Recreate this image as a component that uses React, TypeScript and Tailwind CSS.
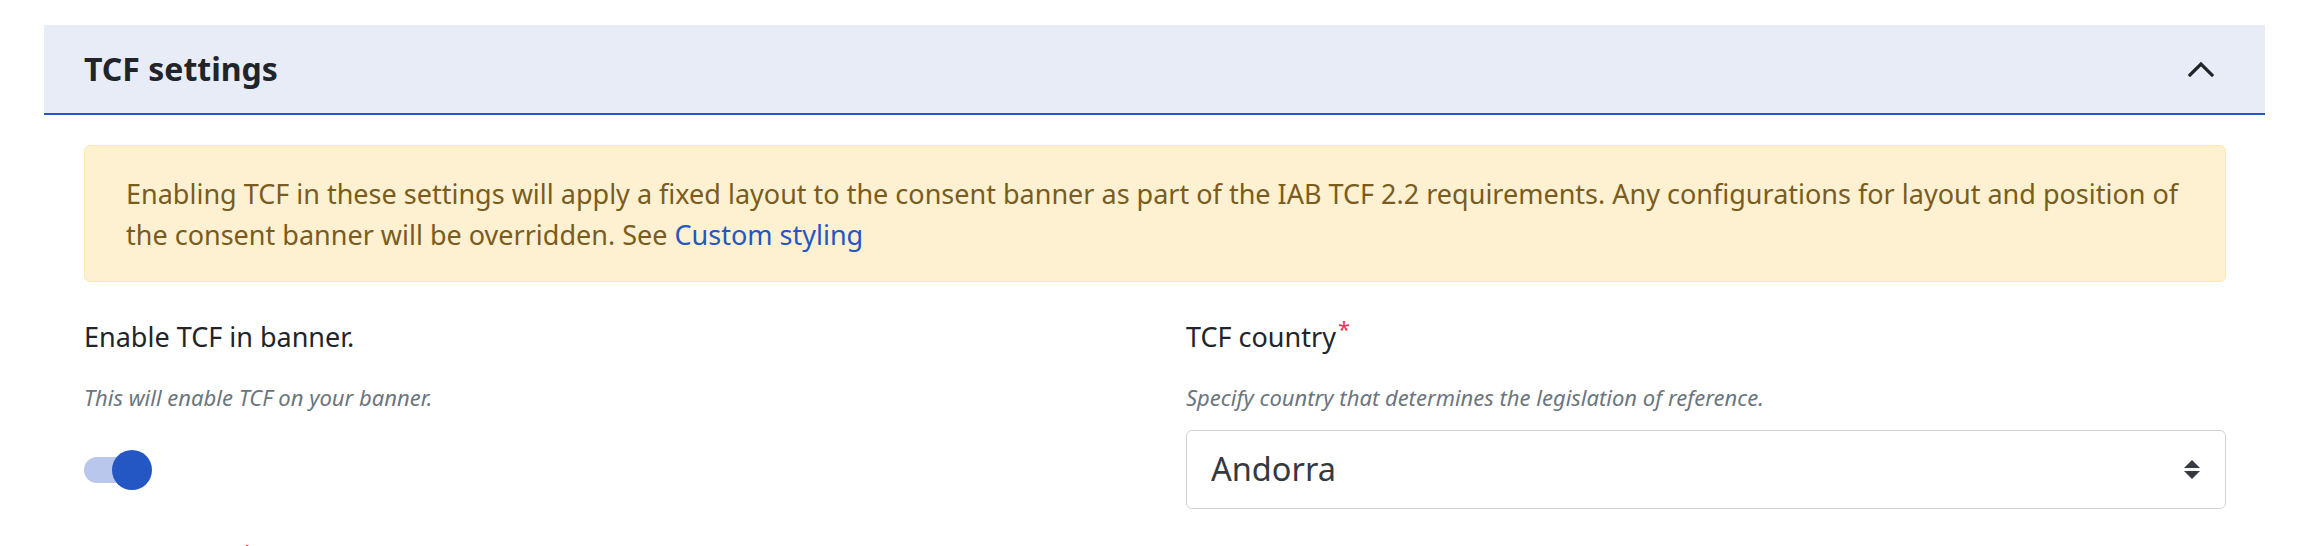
import React from 'react'

function ChevronUp() {
  return (
    <svg width="26" height="16" viewBox="0 0 26 16" fill="none" className="block">
      <path d="M2 14 L13 3 L24 14" stroke="#212529" strokeWidth="3.2" strokeLinecap="square" />
    </svg>
  )
}

function SelectArrows() {
  return (
    <svg width="16" height="20" viewBox="0 0 16 20" className="block">
      <path d="M8 0 L16 8 L0 8 Z" fill="#343a40" />
      <path d="M0 11 L16 11 L8 19 Z" fill="#343a40" />
    </svg>
  )
}

function Toggle({ on }: { on: boolean }) {
  return (
    <div className="relative w-[68px] h-[40px]">
      {/* track */}
      <div className="absolute left-0 top-[7px] w-[58px] h-[26px] rounded-full bg-[#b9c7ec]" />
      {/* knob */}
      <div className={`absolute top-0 w-[40px] h-[40px] rounded-full bg-[#2456c4] ${on ? 'right-0' : 'left-0'}`} />
    </div>
  )
}

function Label({ children, required }: { children: React.ReactNode; required?: boolean }) {
  return (
    <div className="text-[27px] leading-[1.5] text-[#212529]">
      {children}
      {required && <sup className="text-[#e8335a] text-[22px] ml-[2px] relative top-[-10px]">*</sup>}
    </div>
  )
}

function Help({ children }: { children: React.ReactNode }) {
  return <p className="mt-[24px] text-[22px] leading-[1.5] italic text-[#6c757d]">{children}</p>
}

export default function App() {
  return (
    <div className="w-[2316px] h-[546px] overflow-hidden bg-white pt-[25px] font-['Noto_Sans',sans-serif]">
      <section className="ml-[44px] w-[2221px]">
        {/* accordion header */}
        <div className="h-[90px] bg-[#e8ecf7] border-b-2 border-[#2456c4] flex items-center justify-between pl-[40px] pr-[51px]">
          <h2 className="text-[32px] font-bold text-[#212529] leading-none">TCF settings</h2>
          <ChevronUp />
        </div>

        {/* accordion body */}
        <div className="pl-[40px] pr-[39px] pt-[30px]">
          <div className="border border-[#fce8b4] bg-[#fdf1d2] rounded-[6px] px-[41px] pt-[26.5px] pb-[25px] text-[27px] leading-[41.5px] text-[#7a5c1e]">
            Enabling TCF in these settings will apply a fixed layout to the consent banner as part of the IAB TCF 2.2 requirements. Any configurations for layout and position of the consent banner will be overridden. See{' '}
            <a href="#" className="text-[#2456c4]">Custom styling</a>
          </div>

          <div className="grid grid-cols-2 gap-x-[62px] mt-[35px]">
            <div>
              <Label>Enable TCF in banner.</Label>
              <Help>This will enable TCF on your banner.</Help>
              <div className="mt-[35.5px]">
                <Toggle on />
              </div>
            </div>
            <div>
              <Label required>TCF country</Label>
              <Help>Specify country that determines the legislation of reference.</Help>
              <div className="mt-[16px] h-[79px] border border-[#ced4da] rounded-[6px] flex items-center justify-between pl-[24px] pr-[25px] text-[32.5px] text-[#343a40]">
                <span>Andorra</span>
                <SelectArrows />
              </div>
            </div>
          </div>

          <div className="grid grid-cols-2 gap-x-[62px] mt-[31.5px]">
            <div>
              <Label required>TCF vendors</Label>
            </div>
            <div />
          </div>
        </div>
      </section>
    </div>
  )
}
